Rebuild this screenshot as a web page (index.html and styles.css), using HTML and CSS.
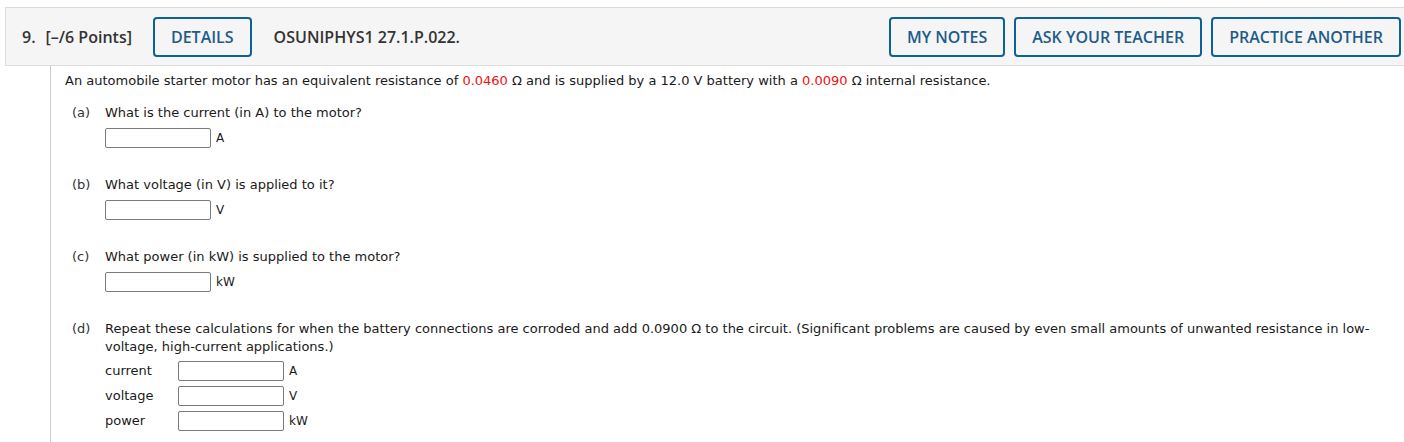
FILE: index.html
```html
<!DOCTYPE html>
<html lang="en">
<head>
    <meta charset="UTF-8">
    <title>Question 9</title>
    <link rel="stylesheet" href="styles.css">
</head>
<body>
    <div class="question">
        <div class="q-header">
            <span class="q-num">9.</span>
            <span class="q-points">[&ndash;/6 Points]</span>
            <button class="btn">DETAILS</button>
            <span class="q-code">OSUNIPHYS1 27.1.P.022.</span>
            <div class="q-actions">
                <button class="btn">MY NOTES</button>
                <button class="btn">ASK YOUR TEACHER</button>
                <button class="btn">PRACTICE ANOTHER</button>
            </div>
        </div>
        <div class="q-body">
            <p class="intro">An automobile starter motor has an equivalent resistance of <span class="given">0.0460</span> &Omega; and is supplied by a 12.0 V battery with a <span class="given">0.0090</span> &Omega; internal resistance.</p>

            <div class="part">
                <span class="part-label">(a)</span>
                <div class="part-content">
                    <p>What is the current (in A) to the motor?</p>
                    <div class="answer"><input type="text"><span class="unit">A</span></div>
                </div>
            </div>

            <div class="part">
                <span class="part-label">(b)</span>
                <div class="part-content">
                    <p>What voltage (in V) is applied to it?</p>
                    <div class="answer"><input type="text"><span class="unit">V</span></div>
                </div>
            </div>

            <div class="part">
                <span class="part-label">(c)</span>
                <div class="part-content">
                    <p>What power (in kW) is supplied to the motor?</p>
                    <div class="answer"><input type="text"><span class="unit">kW</span></div>
                </div>
            </div>

            <div class="part">
                <span class="part-label">(d)</span>
                <div class="part-content">
                    <p>Repeat these calculations for when the battery connections are corroded and add 0.0900 &Omega; to the circuit. (Significant problems are caused by even small amounts of unwanted resistance in low-voltage, high-current applications.)</p>
                    <div class="answer-table">
                        <span class="row-label">current</span>
                        <div class="answer"><input type="text"><span class="unit">A</span></div>
                        <span class="row-label">voltage</span>
                        <div class="answer"><input type="text"><span class="unit">V</span></div>
                        <span class="row-label">power</span>
                        <div class="answer"><input type="text"><span class="unit">kW</span></div>
                    </div>
                </div>
            </div>
        </div>
    </div>
</body>
</html>
```

FILE: styles.css
```css
body {
    margin: 0;
    background-color: #fff;
    color: #1a1a1a;
    font-family: "DejaVu Sans", Verdana, sans-serif;
    font-size: 13px;
}
.question {
    padding: 7px 0 0 5px;
}
.q-header {
    display: flex;
    align-items: center;
    height: 57px;
    padding: 0 3px 0 16px;
    background-color: #f5f5f5;
    border: 1px solid #dcdcdc;
    border-right: none;
    font-family: "Open Sans", sans-serif;
    font-size: 16px;
    color: #333;
}
.q-num {
    font-weight: 600;
    margin-right: 10px;
}
.q-points {
    font-weight: 600;
    margin-right: 21px;
}
.q-code {
    font-weight: 600;
    margin-left: 22px;
}
.q-actions {
    display: flex;
    gap: 9px;
    margin-left: auto;
}
.btn {
    height: 40px;
    padding: 0 16px;
    background-color: #f5f5f5;
    border: 2px solid #0d6199;
    border-radius: 4px;
    color: #1f5c8b;
    font-family: "Open Sans", sans-serif;
    font-size: 16px;
    font-weight: 600;
    cursor: pointer;
}
.q-body {
    margin-left: 45px;
    padding: 6px 0 12px 14px;
    border-left: 1px solid #ccc;
    line-height: 18px;
}
.q-body p {
    margin: 0;
}
.given {
    color: #ee1111;
}
.intro {
    margin-bottom: 14px !important;
}
.part {
    display: flex;
    padding-left: 7px;
    margin-bottom: 28px;
}
.part:last-child {
    margin-bottom: 0;
}
.part-label {
    width: 33px;
    flex-shrink: 0;
    color: #333;
}
.part-content {
    flex: 1;
    padding-right: 12px;
}
.answer {
    display: flex;
    align-items: center;
    gap: 5px;
    margin-top: 6px;
}
.answer input {
    width: 106px;
    height: 20px;
    box-sizing: border-box;
    margin: 0;
    border: 1px solid #7a7a7a;
    border-radius: 2px;
    background: #fff;
}
.unit {
    font-size: 12px;
}
.answer-table {
    display: grid;
    grid-template-columns: 73px auto;
    row-gap: 5px;
    align-items: center;
    justify-content: start;
    margin-top: 5px;
}
.answer-table .answer {
    margin-top: 0;
}
```
